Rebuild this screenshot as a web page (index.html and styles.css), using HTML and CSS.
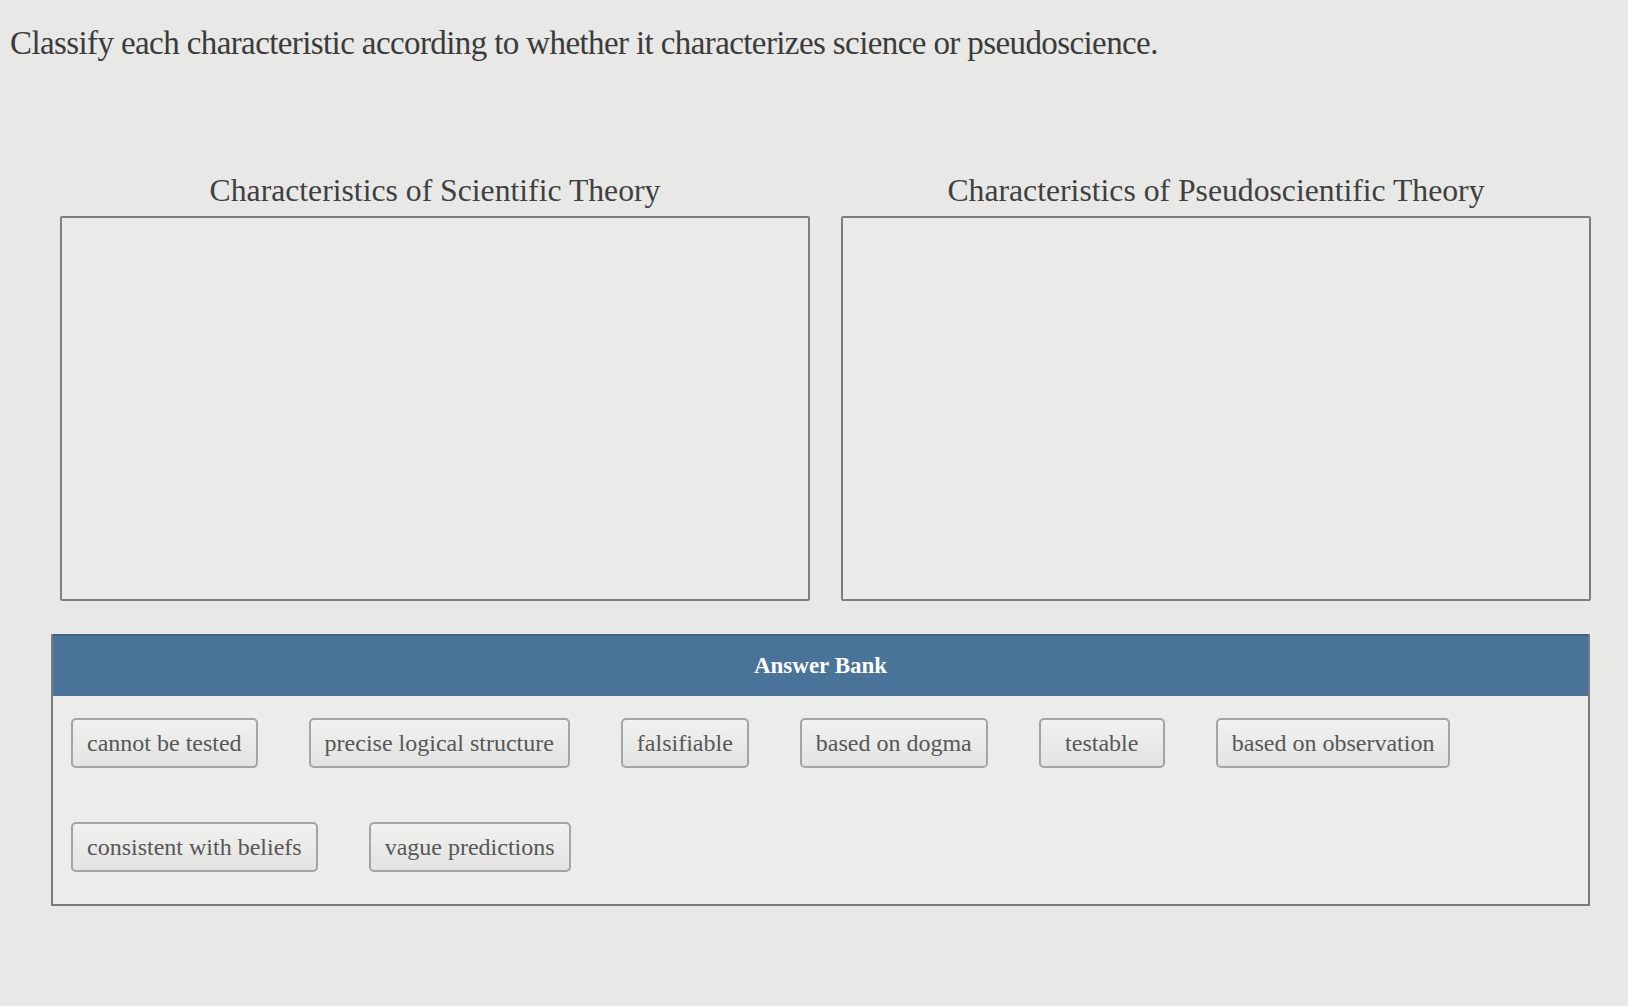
FILE: index.html
```html
<!DOCTYPE html>
<html lang="en">
<head>
<meta charset="utf-8">
<title>Classify characteristics</title>
<link rel="stylesheet" href="styles.css">
</head>
<body>
<p class="prompt">Classify each characteristic according to whether it characterizes science or pseudoscience.</p>
<div class="columns">
  <section class="bin">
    <h2 class="bin-title">Characteristics of Scientific Theory</h2>
    <div class="drop"></div>
  </section>
  <section class="bin">
    <h2 class="bin-title">Characteristics of Pseudoscientific Theory</h2>
    <div class="drop"></div>
  </section>
</div>
<div class="bank">
  <div class="bank-head">Answer Bank</div>
  <div class="bank-body">
    <span class="chip">cannot be tested</span>
    <span class="chip">precise logical structure</span>
    <span class="chip">falsifiable</span>
    <span class="chip">based on dogma</span>
    <span class="chip">testable</span>
    <span class="chip">based on observation</span>
    <span class="chip">consistent with beliefs</span>
    <span class="chip">vague predictions</span>
  </div>
</div>
</body>
</html>
```
FILE: styles.css
```css
html, body {
  margin: 0;
  padding: 0;
}
body {
  background: #e8e8e6;
  font-family: "Liberation Serif", "Times New Roman", serif;
  color: #3a3a3a;
  width: 1628px;
  height: 1006px;
  overflow: hidden;
}
.prompt {
  margin: 0;
  padding: 24px 0 0 10px;
  font-size: 33px;
  line-height: 38px;
  letter-spacing: -0.6px;
  color: #3b3b3b;
}
.columns {
  display: grid;
  grid-template-columns: 1fr 1fr;
  column-gap: 31px;
  margin: 111px 37px 0 60px;
}
.bin {
  display: flex;
  flex-direction: column;
}
.bin-title {
  margin: 0 0 7px;
  text-align: center;
  font-weight: normal;
  font-size: 31.7px;
  line-height: 36px;
  color: #404040;
}
.drop {
  height: 381px;
  border: 2px solid #7e7e7e;
  border-radius: 2px;
  background: #eaeae8;
}
.bank {
  margin: 33px 38px 0 51px;
  border: 2px solid #7a7a7a;
  border-top: 0;
  background: #ececeb;
}
.bank-head {
  height: 62px;
  background: #4a739a;
  border-top: 2px solid #3e5f7e;
  box-sizing: border-box;
  display: flex;
  align-items: center;
  justify-content: center;
  color: #ffffff;
  font-weight: bold;
  font-size: 23px;
}
.bank-body {
  display: flex;
  flex-wrap: wrap;
  column-gap: 51px;
  row-gap: 54px;
  padding: 22px 20px 32px 18px;
}
.chip {
  display: inline-block;
  min-width: 126px;
  height: 50px;
  box-sizing: border-box;
  padding: 11px 14px;
  text-align: center;
  font-size: 24px;
  line-height: 24px;
  color: #575757;
  border: 2px solid #a4a4a4;
  border-radius: 5px;
  background: linear-gradient(#f1f1f0, #e3e3e2);
}
```
